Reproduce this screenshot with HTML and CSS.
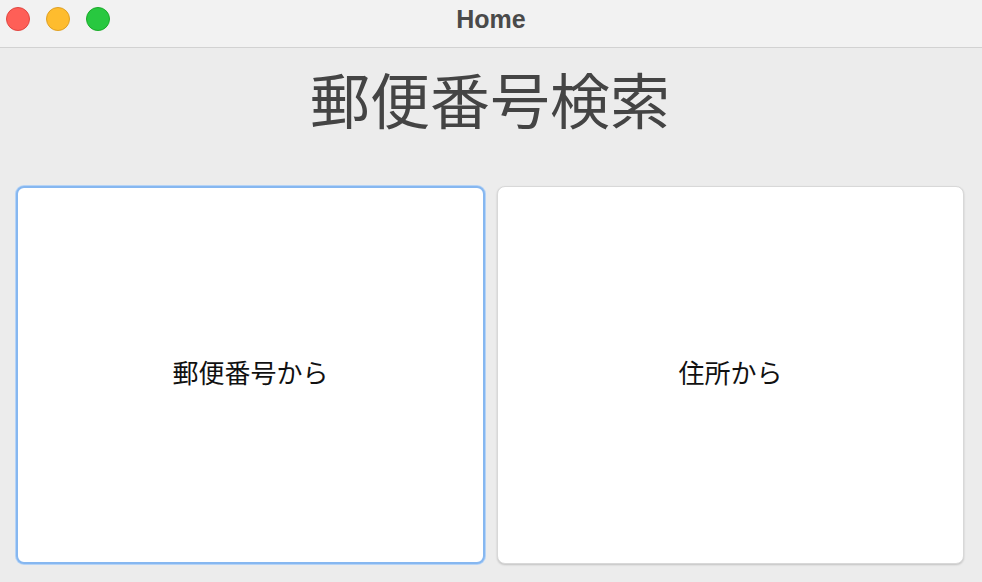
FILE: index.html
```html
<!DOCTYPE html>
<html lang="ja">
<head>
<meta charset="utf-8">
<title>Home</title>
<link rel="stylesheet" href="styles.css">
</head>
<body>
<div class="window">
  <header class="titlebar">
    <div class="lights">
      <span class="light red"></span>
      <span class="light yellow"></span>
      <span class="light green"></span>
    </div>
    <div class="title">Home</div>
  </header>
  <main class="content">
    <h1 class="heading">郵便番号検索</h1>
    <div class="cards">
      <button class="card focused">郵便番号から</button>
      <button class="card">住所から</button>
    </div>
  </main>
</div>
</body>
</html>
```

FILE: styles.css
```css
html, body {
  margin: 0;
  padding: 0;
  width: 982px;
  height: 582px;
  overflow: hidden;
  background: #ececec;
  font-family: "Noto Sans CJK JP", "Liberation Sans", sans-serif;
}
.window {
  display: flex;
  flex-direction: column;
  height: 582px;
}
.titlebar {
  position: relative;
  height: 47px;
  background: #f2f2f2;
  border-bottom: 1px solid #d2d2d2;
  display: flex;
  align-items: center;
  justify-content: center;
  flex-shrink: 0;
}
.lights {
  position: absolute;
  left: 6px;
  top: 7px;
  display: flex;
  gap: 16px;
}
.light {
  width: 24px;
  height: 24px;
  border-radius: 50%;
  box-sizing: border-box;
}
.red { background: #fe5f57; border: 1px solid #e14640; }
.yellow { background: #febc2e; border: 1px solid #dfa023; }
.green { background: #28c840; border: 1px solid #1aab29; }
.title {
  font-family: "Liberation Sans", Arial, sans-serif;
  font-weight: bold;
  font-size: 25px;
  color: #4a4a4a;
  margin-top: -9px;
}
.content {
  flex: 1;
  display: flex;
  flex-direction: column;
  padding: 0 18px 18px 16px;
}
.heading {
  margin: 0;
  height: 138px;
  display: flex;
  align-items: center;
  justify-content: center;
  font-size: 60px;
  font-weight: 400;
  color: #444444;
  padding-bottom: 40px;
  box-sizing: border-box;
}
.cards {
  flex: 1;
  display: flex;
  gap: 12px;
}
.card {
  flex: 1;
  background: #ffffff;
  border: 1px solid #d8d8d8;
  border-radius: 8px;
  box-shadow: 0 1px 2px rgba(0,0,0,0.18);
  font-family: "Noto Sans CJK JP", "Liberation Sans", sans-serif;
  font-size: 26px;
  color: #111;
  display: flex;
  align-items: center;
  justify-content: center;
  padding: 0 0 8px 0;
  margin: 0;
}
.card.focused {
  border: 2px solid #86b7f0;
  box-shadow: 0 0 0 1px #b5d3f6;
}
```
